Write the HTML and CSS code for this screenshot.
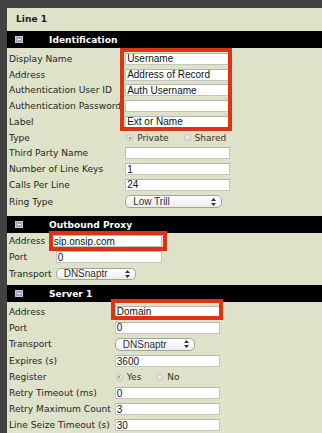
FILE: index.html
```html
<!DOCTYPE html>
<html>
<head>
<meta charset="utf-8">
<link rel="stylesheet" href="styles.css">
</head>
<body>
<div class="page">
  <div class="title">Line 1</div>

  <section class="section">
    <div class="bar">
      <svg class="toggle" width="8" height="7" viewBox="0 0 8 7"><rect x="0" y="0" width="8" height="7" fill="#9ca5b8"/><rect x="0.5" y="0.5" width="7" height="6" fill="none" stroke="#c3c9d6" stroke-width="1"/><rect x="2" y="3" width="4" height="1" fill="#eef0f5"/></svg>
      <span class="bar-title">Identification</span>
    </div>
    <table class="form form-ident">
      <tr class="row"><td class="lbl">Display Name</td><td><input class="field" type="text" value="Username"></td></tr>
      <tr class="row"><td class="lbl">Address</td><td><input class="field" type="text" value="Address of Record"></td></tr>
      <tr class="row"><td class="lbl">Authentication User ID</td><td><input class="field" type="text" value="Auth Username"></td></tr>
      <tr class="row"><td class="lbl">Authentication Password</td><td><input class="field" type="text" value=""></td></tr>
      <tr class="row"><td class="lbl">Label</td><td><input class="field" type="text" value="Ext or Name"></td></tr>
      <tr class="row"><td class="lbl">Type</td><td>
        <div class="radios">
          <span class="radio radio-on"></span><span class="radio-text">Private</span>
          <span class="radio"></span><span class="radio-text">Shared</span>
        </div>
      </td></tr>
      <tr class="row"><td class="lbl">Third Party Name</td><td><input class="field" type="text" value=""></td></tr>
      <tr class="row"><td class="lbl">Number of Line Keys</td><td><input class="field" type="text" value="1"></td></tr>
      <tr class="row"><td class="lbl">Calls Per Line</td><td><input class="field" type="text" value="24"></td></tr>
      <tr class="row row-select"><td class="lbl">Ring Type</td><td>
        <div class="select select-wide"><span class="select-text">Low Trill</span><svg class="arrows" width="5" height="8" viewBox="0 0 5 8"><path d="M2.5 0 L5 3 L0 3 Z M2.5 8 L5 5 L0 5 Z" fill="#333"/></svg></div>
      </td></tr>
    </table>
  </section>

  <section class="section">
    <div class="bar">
      <svg class="toggle" width="8" height="7" viewBox="0 0 8 7"><rect x="0" y="0" width="8" height="7" fill="#9ca5b8"/><rect x="0.5" y="0.5" width="7" height="6" fill="none" stroke="#c3c9d6" stroke-width="1"/><rect x="2" y="3" width="4" height="1" fill="#eef0f5"/></svg>
      <span class="bar-title">Outbound Proxy</span>
    </div>
    <table class="form form-proxy">
      <tr class="row row-16"><td class="lbl">Address</td><td><input class="field field-proxy field-shift" type="text" value="sip.onsip.com"></td></tr>
      <tr class="row row-16"><td class="lbl">Port</td><td><input class="field field-proxy" type="text" value="0"></td></tr>
      <tr class="row row-select"><td class="lbl">Transport</td><td>
        <div class="select"><span class="select-text">DNSnaptr</span><svg class="arrows" width="5" height="8" viewBox="0 0 5 8"><path d="M2.5 0 L5 3 L0 3 Z M2.5 8 L5 5 L0 5 Z" fill="#333"/></svg></div>
      </td></tr>
    </table>
  </section>

  <section class="section">
    <div class="bar">
      <svg class="toggle" width="8" height="7" viewBox="0 0 8 7"><rect x="0" y="0" width="8" height="7" fill="#9ca5b8"/><rect x="0.5" y="0.5" width="7" height="6" fill="none" stroke="#c3c9d6" stroke-width="1"/><rect x="2" y="3" width="4" height="1" fill="#eef0f5"/></svg>
      <span class="bar-title">Server 1</span>
    </div>
    <table class="form form-server">
      <tr class="row row-16"><td class="lbl">Address</td><td><input class="field" type="text" value="Domain"></td></tr>
      <tr class="row row-16"><td class="lbl">Port</td><td><input class="field" type="text" value="0"></td></tr>
      <tr class="row row-select"><td class="lbl">Transport</td><td>
        <div class="select"><span class="select-text">DNSnaptr</span><svg class="arrows" width="5" height="8" viewBox="0 0 5 8"><path d="M2.5 0 L5 3 L0 3 Z M2.5 8 L5 5 L0 5 Z" fill="#333"/></svg></div>
      </td></tr>
      <tr class="row row-16"><td class="lbl">Expires (s)</td><td><input class="field" type="text" value="3600"></td></tr>
      <tr class="row row-16"><td class="lbl">Register</td><td>
        <div class="radios">
          <span class="radio radio-on"></span><span class="radio-text">Yes</span>
          <span class="radio"></span><span class="radio-text">No</span>
        </div>
      </td></tr>
      <tr class="row row-16"><td class="lbl">Retry Timeout (ms)</td><td><input class="field" type="text" value="0"></td></tr>
      <tr class="row row-16"><td class="lbl">Retry Maximum Count</td><td><input class="field" type="text" value="3"></td></tr>
      <tr class="row row-16"><td class="lbl">Line Seize Timeout (s)</td><td><input class="field" type="text" value="30"></td></tr>
    </table>
  </section>

  <div class="mark mark-ident"></div>
  <div class="mark mark-proxy"></div>
  <div class="mark mark-server"></div>
</div>
</body>
</html>
```

FILE: styles.css
```css
html, body {
  margin: 0;
  padding: 0;
}
body {
  background: #424242;
  height: 433px;
  overflow: hidden;
}
.page {
  position: relative;
  margin: 8px 0 0 7px;
  background: #dde2c8;
  height: 425px;
  overflow: hidden;
  font-family: "DejaVu Sans", Verdana, sans-serif;
  color: #222;
}
.title {
  height: 23px;
  line-height: 23px;
  padding-left: 9px;
  font-weight: bold;
  font-size: 9.1px;
  color: #1e1e1e;
}
.bar {
  display: flex;
  align-items: center;
  height: 17px;
  background: #000;
  padding-left: 8px;
}
.toggle {
  display: block;
  flex: none;
}
.bar-title {
  margin-left: 26px;
  color: #fff;
  font-weight: bold;
  font-size: 9.1px;
}
.form {
  border-collapse: collapse;
  border-spacing: 0;
}
.form td {
  padding: 0;
  vertical-align: middle;
}
.form td.lbl {
  padding: 0 4px 0 2px;
  font-size: 9.1px;
  white-space: nowrap;
  color: #262626;
}
.row td {
  height: 15.75px;
}
.row-16 td {
  height: 16px;
}
.row-select td {
  height: 17.5px;
}
.form-ident {
  margin: 3px 0 5.75px;
}
.form-proxy {
  margin: 0 0 2.5px;
}
.form-server {
  margin: 1.5px 0 0;
}
.field {
  display: block;
  box-sizing: border-box;
  width: 105px;
  height: 12px;
  margin: 0;
  padding: 0 1px;
  border: 1px solid #c4c4c4;
  border-top-color: #b4b4b4;
  background: #fff;
  font-family: "Liberation Sans", Arial, sans-serif;
  font-size: 10px;
  line-height: 10px;
  color: #111;
  outline: none;
}
.field-proxy {
  width: 106px;
}
.field-shift {
  margin-left: -4px;
  width: 110px;
}
.radios {
  display: flex;
  align-items: center;
  margin-left: 1px;
  font-size: 9px;
  color: #333;
}
.radio {
  box-sizing: border-box;
  width: 7px;
  height: 7px;
  border-radius: 50%;
  border: 1px solid #bdbdbd;
  background: linear-gradient(#f4f4f4, #dcdcdc);
  position: relative;
  flex: none;
}
.radio-on::after {
  content: "";
  position: absolute;
  left: 1.5px;
  top: 1.5px;
  width: 2px;
  height: 2px;
  border-radius: 50%;
  background: #7d7d7d;
}
.radio-text {
  margin-left: 4px;
  margin-right: 15px;
}
.select {
  box-sizing: border-box;
  display: flex;
  align-items: center;
  justify-content: space-between;
  width: 80px;
  height: 12.5px;
  padding: 0 5px 0 7px;
  border: 1px solid #a2a2a2;
  border-radius: 5px;
  background: linear-gradient(#ffffff, #ececec);
  font-family: "Liberation Sans", Arial, sans-serif;
  font-size: 10px;
  color: #333;
}
.select-wide {
  width: 97px;
}
.arrows {
  display: block;
  flex: none;
}
.mark {
  position: absolute;
  box-sizing: border-box;
  border: 4px solid #dd3118;
}
.mark-ident {
  left: 113px;
  top: 40px;
  width: 112px;
  height: 83px;
}
.mark-proxy {
  left: 42px;
  top: 223px;
  width: 118px;
  height: 20px;
}
.mark-server {
  left: 104px;
  top: 290.5px;
  width: 112px;
  height: 21.5px;
}
```
